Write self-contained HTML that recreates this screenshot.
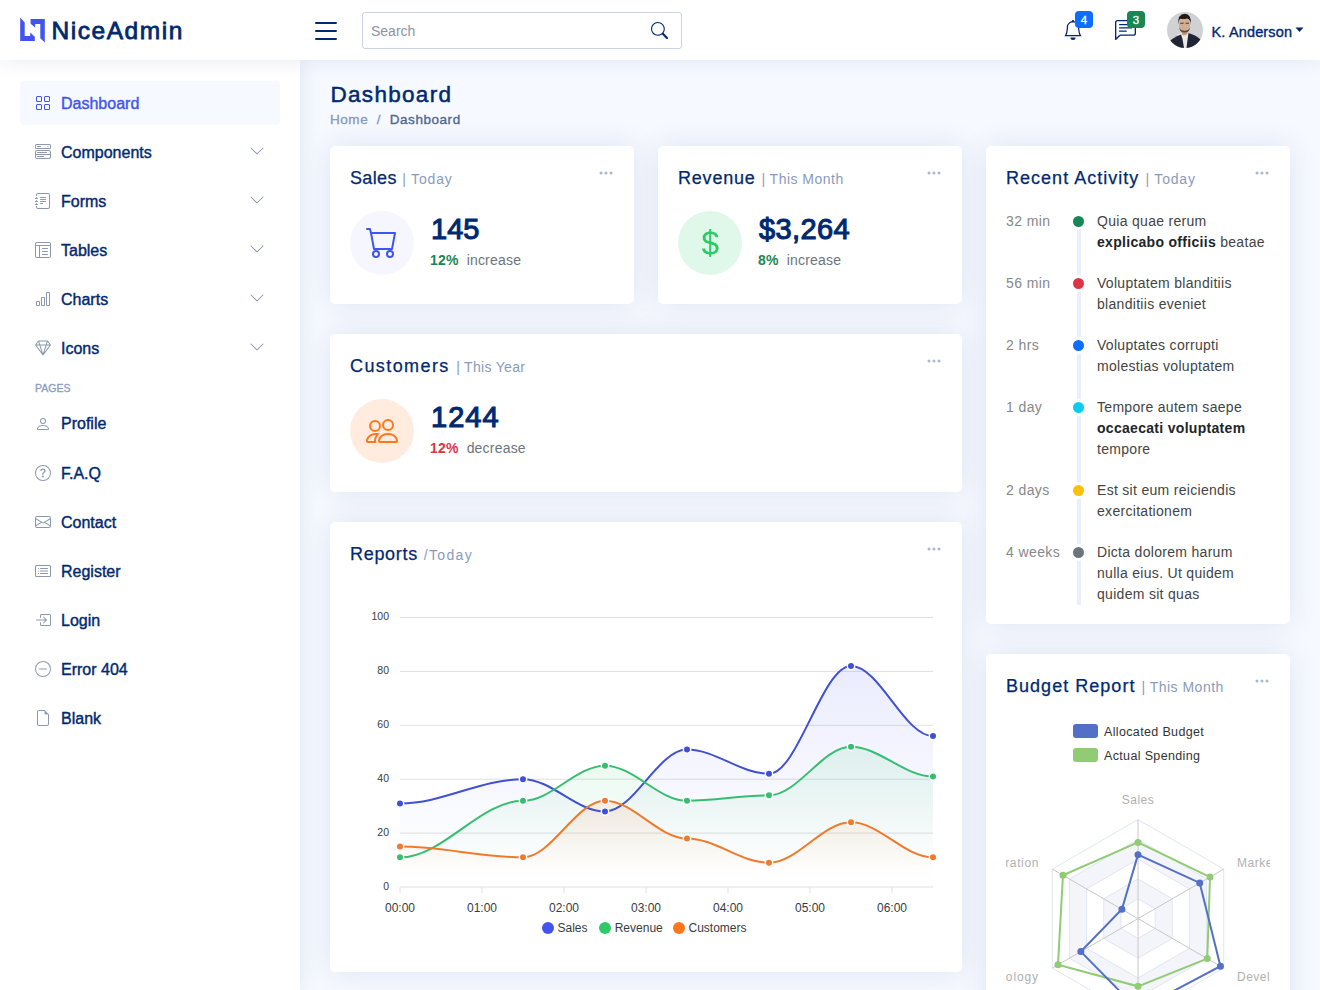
<!DOCTYPE html>
<html>
<head>
<meta charset="utf-8">
<style>
*{box-sizing:border-box;margin:0;padding:0}
html,body{width:1320px;height:990px;overflow:hidden}
body{font-family:"Liberation Sans",sans-serif;background:#f6f9ff;color:#444;position:relative}
svg text{font-family:"Liberation Sans",sans-serif}
.abs{position:absolute}
/* header */
#header{position:absolute;left:0;top:0;width:1320px;height:60px;background:#fff;box-shadow:0 2px 20px rgba(1,41,112,.08);z-index:5}
.logo-text{position:absolute;left:51.5px;top:15px;font-size:24.5px;line-height:32px;font-weight:400;color:#012970;letter-spacing:1.55px;-webkit-text-stroke:0.8px #012970}
.search{position:absolute;left:362px;top:11.5px;width:320px;height:37px;border:1px solid rgba(1,41,112,.2);border-radius:3px}
.search span{position:absolute;left:8px;top:9px;font-size:14px;line-height:18px;color:#8a94a6}
.badge{position:absolute;top:11px;height:17px;width:18px;border-radius:4px;color:#fff;font-size:11.5px;line-height:18px;text-align:center;-webkit-text-stroke:.3px #fff}
.pname{position:absolute;left:1211.5px;top:23px;letter-spacing:.15px;font-size:14.5px;line-height:18px;font-weight:400;color:#012970;-webkit-text-stroke:0.35px #012970}
/* sidebar */
#sidebar{position:absolute;left:0;top:60px;width:300px;height:930px;background:#fff;box-shadow:0 0 20px rgba(1,41,112,.1);z-index:4}
.nav{position:absolute;left:20px;top:20.5px;width:260px}
.nl{position:relative;height:44.08px;margin-bottom:5px;border-radius:4px;color:#012970;font-size:16px;font-weight:400;-webkit-text-stroke:0.4px #012970}
.nl.active{-webkit-text-stroke:0.4px #4154f1}
.nl.active{background:#f6f9ff;color:#4154f1}
.nl svg.ic{position:absolute;left:15px;top:14.2px;width:16px;height:16px}
.nl .t{position:absolute;left:41px;top:14px;line-height:18px}
.nl svg.chev{position:absolute;left:229px;top:13.5px;width:16px;height:16px}
.heading{position:relative;margin:10px 0 5px 15px;height:16.5px;font-size:10.5px;line-height:16.5px;color:#899bbd;font-weight:400;-webkit-text-stroke:0.3px #899bbd;text-transform:uppercase}
/* page title */
.ptitle{position:absolute;left:330.5px;top:79.5px;font-size:22.5px;line-height:29px;font-weight:400;color:#012970;-webkit-text-stroke:0.5px #012970;letter-spacing:1.3px}
.bc{position:absolute;left:330px;top:110.5px;font-size:13.5px;line-height:18px;letter-spacing:.55px;color:#899bbd;font-weight:400;-webkit-text-stroke:0.35px #899bbd}
.bc .act{color:#51678f;-webkit-text-stroke:0.35px #51678f}
/* cards */
.card{position:absolute;background:#fff;border-radius:5px;box-shadow:0 0 30px rgba(1,41,112,.1)}
.ct{position:absolute;left:20px;top:21px;font-size:18px;line-height:22px;color:#012970;white-space:nowrap;-webkit-text-stroke:0.25px #012970}
.ct span{color:#899bbd;font-size:14px;-webkit-text-stroke:0}
.dots{position:absolute;right:20px;top:25px;width:16px;height:4px}
.icon-c{position:absolute;left:20px;top:64.6px;width:64px;height:64px;border-radius:50%}
.num{position:absolute;left:101px;top:65.5px;font-size:29px;line-height:34px;font-weight:400;color:#012970;-webkit-text-stroke:1.1px #012970}
.sub{position:absolute;left:100px;top:105px;font-size:14px;line-height:18px;color:#6c757d;white-space:nowrap;letter-spacing:.2px}
.sub b{font-weight:700;margin-right:8px}
/* activity */
.act-list{position:absolute;left:20px;top:64.6px;width:264px;font-size:14px}
.ai{position:relative;display:flex}
.al{position:relative;width:64px;flex:0 0 64px;color:#888;line-height:21px;letter-spacing:.4px}
.al:before{content:"";position:absolute;right:-11px;width:4px;top:0;bottom:0;background:#eceefe}
.ai:first-child .al:before{top:5px}
.ab{position:relative;z-index:1;flex:0 0 17px;height:17px;margin-top:2.4px;border:3px solid #fff;border-radius:50%}
.ac{padding-left:10px;padding-bottom:20px;line-height:21px;color:#444;white-space:nowrap;letter-spacing:.3px}
.ai:last-child .ac{padding-bottom:0}
.ac b{color:#212529;font-weight:700}
.chart{position:absolute;left:0;top:0}
.radar{position:absolute;left:0;top:0}
</style>
</head>
<body>
<div id="header">
  <svg class="abs" style="left:16px;top:14px" width="34" height="32" viewBox="16 14 34 32">
    <path d="M20.2 17.6 L24.7 22.4 L24.7 36 L30.2 36 L30.2 32.4 L34.8 36.7 L34.8 40.9 L20.2 40.9 Z" fill="#4154f1"/>
    <path d="M30.6 18.9 L44.8 18.9 L44.8 42.5 L40.3 38.3 L40.3 24 L35.1 24 L35.1 27.6 L30.6 23.7 Z" fill="#4154f1"/>
  </svg>
  <div class="logo-text">NiceAdmin</div>
  <svg class="abs" style="left:310px;top:15px" width="32" height="32" viewBox="0 0 16 16" fill="#012970"><path d="M2.5 12a.5.5 0 0 1 .5-.5h10a.5.5 0 0 1 0 1H3a.5.5 0 0 1-.5-.5zm0-4a.5.5 0 0 1 .5-.5h10a.5.5 0 0 1 0 1H3a.5.5 0 0 1-.5-.5zm0-4a.5.5 0 0 1 .5-.5h10a.5.5 0 0 1 0 1H3a.5.5 0 0 1-.5-.5z"/></svg>
  <div class="search"><span>Search</span>
    <svg class="abs" style="left:288px;top:9px" width="17" height="17" viewBox="0 0 16 16" fill="#012970"><path d="M11.742 10.344a6.5 6.5 0 1 0-1.397 1.398h-.001c.03.04.062.078.098.115l3.85 3.85a1 1 0 0 0 1.415-1.414l-3.85-3.85a1.007 1.007 0 0 0-.115-.1zM12 6.5a5.5 5.5 0 1 1-11 0 5.5 5.5 0 0 1 11 0z"/></svg>
  </div>
  <!-- bell -->
  <svg class="abs" style="left:1063px;top:20px" width="20" height="20" viewBox="0 0 16 16" fill="#012970"><path d="M8 16a2 2 0 0 0 2-2H6a2 2 0 0 0 2 2zM8 1.918l-.797.161A4.002 4.002 0 0 0 4 6c0 .628-.134 2.197-.459 3.742-.16.767-.376 1.566-.663 2.258h10.244c-.287-.692-.502-1.49-.663-2.258C12.134 8.197 12 6.628 12 6a4.002 4.002 0 0 0-3.203-3.92L8 1.917zM14.22 12c.223.447.481.801.78 1H1c.299-.199.557-.553.78-1C2.68 10.2 3 6.88 3 6c0-2.42 1.72-4.44 4.005-4.901a1 1 0 1 1 1.99 0A5.002 5.002 0 0 1 13 6c0 .88.32 4.2 1.22 6z"/></svg>
  <div class="badge" style="left:1075px;background:#0d6efd">4</div>
  <!-- chat -->
  <svg class="abs" style="left:1114.5px;top:19.8px" width="21" height="21" viewBox="0 0 16 16" fill="#012970"><path d="M14 1a1 1 0 0 1 1 1v8a1 1 0 0 1-1 1H4.414A2 2 0 0 0 3 11.586l-2 2V2a1 1 0 0 1 1-1h12zM2 0a2 2 0 0 0-2 2v12.793a.5.5 0 0 0 .854.353l2.853-2.853A1 1 0 0 1 4.414 12H14a2 2 0 0 0 2-2V2a2 2 0 0 0-2-2H2z"/><path d="M3 3.5a.5.5 0 0 1 .5-.5h9a.5.5 0 0 1 0 1h-9a.5.5 0 0 1-.5-.5zM3 6a.5.5 0 0 1 .5-.5h9a.5.5 0 0 1 0 1h-9A.5.5 0 0 1 3 6zm0 2.5a.5.5 0 0 1 .5-.5h5a.5.5 0 0 1 0 1h-5a.5.5 0 0 1-.5-.5z"/></svg>
  <div class="badge" style="left:1127px;background:#198754">3</div>
  <!-- avatar -->
  <svg class="abs" style="left:1167px;top:12px" width="36" height="36" viewBox="0 0 36 36">
    <defs><clipPath id="av"><circle cx="18" cy="18" r="18"/></clipPath></defs>
    <g clip-path="url(#av)">
      <rect width="36" height="36" fill="#cfd1d4"/>
      <path d="M11 22 Q17 20 23 21 L24 36 L11 36 Z" fill="#eceae8"/>
      <path d="M2 30 Q5 26 14 22.5 L15.5 27 L17 36 L2 36 Z" fill="#1f2535"/>
      <path d="M21.5 21 Q30 23.5 34 28 L35 36 L19.5 36 L20.5 28 Z" fill="#1f2535"/>
      <path d="M14.5 17 L15 22.5 Q17.5 24.5 20.5 22 L20.5 17 Z" fill="#c19a80"/>
      <ellipse cx="17.6" cy="12.5" rx="5.6" ry="7.2" fill="#d2ad92"/>
      <path d="M12 15 Q12.5 20.5 17.6 20.5 Q22.7 20.5 23.2 15 Q22 18.5 17.6 18.8 Q13.2 18.5 12 15 Z" fill="#5a4436"/>
      <path d="M11.3 12.5 Q10.5 2 17.8 1.8 Q24.5 2 23.8 12 Q23.2 7 20 6.5 Q16 7.5 13 6.8 Q11.8 8.5 11.3 12.5 Z" fill="#231a16"/>
      <path d="M13.2 11.2 h3.4 M18.6 11.2 h3.4" stroke="#4a3a32" stroke-width="1.1"/>
    </g>
  </svg>
  <div class="pname">K. Anderson</div>
  <svg class="abs" style="left:1295px;top:27px" width="9" height="6" viewBox="0 0 9 6"><path d="M0.5 0.5 L8.5 0.5 L4.5 5 Z" fill="#012970"/></svg>
</div>

<div id="sidebar">
 <div class="nav">
  <div class="nl active"><svg class="ic" viewBox="0 0 16 16" fill="#4154f1"><path d="M1 2.5A1.5 1.5 0 0 1 2.5 1h3A1.5 1.5 0 0 1 7 2.5v3A1.5 1.5 0 0 1 5.5 7h-3A1.5 1.5 0 0 1 1 5.5v-3zM2.5 2a.5.5 0 0 0-.5.5v3a.5.5 0 0 0 .5.5h3a.5.5 0 0 0 .5-.5v-3a.5.5 0 0 0-.5-.5h-3zm6.5.5A1.5 1.5 0 0 1 10.5 1h3A1.5 1.5 0 0 1 15 2.5v3A1.5 1.5 0 0 1 13.5 7h-3A1.5 1.5 0 0 1 9 5.5v-3zm1.5-.5a.5.5 0 0 0-.5.5v3a.5.5 0 0 0 .5.5h3a.5.5 0 0 0 .5-.5v-3a.5.5 0 0 0-.5-.5h-3zM1 10.5A1.5 1.5 0 0 1 2.5 9h3A1.5 1.5 0 0 1 7 10.5v3A1.5 1.5 0 0 1 5.5 15h-3A1.5 1.5 0 0 1 1 13.5v-3zm1.5-.5a.5.5 0 0 0-.5.5v3a.5.5 0 0 0 .5.5h3a.5.5 0 0 0 .5-.5v-3a.5.5 0 0 0-.5-.5h-3zm6.5.5A1.5 1.5 0 0 1 10.5 9h3a1.5 1.5 0 0 1 1.5 1.5v3a1.5 1.5 0 0 1-1.5 1.5h-3A1.5 1.5 0 0 1 9 13.5v-3zm1.5-.5a.5.5 0 0 0-.5.5v3a.5.5 0 0 0 .5.5h3a.5.5 0 0 0 .5-.5v-3a.5.5 0 0 0-.5-.5h-3z"/></svg><span class="t">Dashboard</span></div>
  <div class="nl"><svg class="ic" viewBox="0 0 16 16" fill="#8d98ae"><path d="M0 1.5A1.5 1.5 0 0 1 1.5 0h13A1.5 1.5 0 0 1 16 1.5v2A1.5 1.5 0 0 1 14.5 5h-13A1.5 1.5 0 0 1 0 3.5v-2zM1.5 1a.5.5 0 0 0-.5.5v2a.5.5 0 0 0 .5.5h13a.5.5 0 0 0 .5-.5v-2a.5.5 0 0 0-.5-.5h-13z"/><path d="M2 2.5a.5.5 0 0 1 .5-.5h3a.5.5 0 0 1 0 1h-3a.5.5 0 0 1-.5-.5zm10.823.323-.396-.396A.25.25 0 0 1 12.604 2h.792a.25.25 0 0 1 .177.427l-.396.396a.25.25 0 0 1-.354 0zM0 8a2 2 0 0 1 2-2h12a2 2 0 0 1 2 2v5a2 2 0 0 1-2 2H2a2 2 0 0 1-2-2V8zm1 3v2a1 1 0 0 0 1 1h12a1 1 0 0 0 1-1v-2H1zm14-1V8a1 1 0 0 0-1-1H2a1 1 0 0 0-1 1v2h14zM2 8.5a.5.5 0 0 1 .5-.5h9a.5.5 0 0 1 0 1h-9a.5.5 0 0 1-.5-.5zm0 4a.5.5 0 0 1 .5-.5h6a.5.5 0 0 1 0 1h-6a.5.5 0 0 1-.5-.5z"/></svg><span class="t">Components</span><svg class="chev" viewBox="0 0 16 16" fill="#8d98ae"><path d="M1.646 4.646a.5.5 0 0 1 .708 0L8 10.293l5.646-5.647a.5.5 0 0 1 .708.708l-6 6a.5.5 0 0 1-.708 0l-6-6a.5.5 0 0 1 0-.708z"/></svg></div>
  <div class="nl"><svg class="ic" viewBox="0 0 16 16" fill="#8d98ae"><path d="M5 10.5a.5.5 0 0 1 .5-.5h2a.5.5 0 0 1 0 1h-2a.5.5 0 0 1-.5-.5zm0-2a.5.5 0 0 1 .5-.5h5a.5.5 0 0 1 0 1h-5a.5.5 0 0 1-.5-.5zm0-2a.5.5 0 0 1 .5-.5h5a.5.5 0 0 1 0 1h-5a.5.5 0 0 1-.5-.5zm0-2a.5.5 0 0 1 .5-.5h5a.5.5 0 0 1 0 1h-5a.5.5 0 0 1-.5-.5z"/><path d="M3 0h10a2 2 0 0 1 2 2v12a2 2 0 0 1-2 2H3a2 2 0 0 1-2-2v-1h1v1a1 1 0 0 0 1 1h10a1 1 0 0 0 1-1V2a1 1 0 0 0-1-1H3a1 1 0 0 0-1 1v1H1V2a2 2 0 0 1 2-2z"/><path d="M1 5v-.5a.5.5 0 0 1 1 0V5h.5a.5.5 0 0 1 0 1h-2a.5.5 0 0 1 0-1H1zm0 3v-.5a.5.5 0 0 1 1 0V8h.5a.5.5 0 0 1 0 1h-2a.5.5 0 0 1 0-1H1zm0 3v-.5a.5.5 0 0 1 1 0v.5h.5a.5.5 0 0 1 0 1h-2a.5.5 0 0 1 0-1H1z"/></svg><span class="t">Forms</span><svg class="chev" viewBox="0 0 16 16" fill="#8d98ae"><path d="M1.646 4.646a.5.5 0 0 1 .708 0L8 10.293l5.646-5.647a.5.5 0 0 1 .708.708l-6 6a.5.5 0 0 1-.708 0l-6-6a.5.5 0 0 1 0-.708z"/></svg></div>
  <div class="nl"><svg class="ic" viewBox="0 0 16 16" fill="#8d98ae"><path d="M13 6.5a.5.5 0 0 0-.5-.5h-5a.5.5 0 0 0 0 1h5a.5.5 0 0 0 .5-.5zm0 3a.5.5 0 0 0-.5-.5h-5a.5.5 0 0 0 0 1h5a.5.5 0 0 0 .5-.5zm-.5 2.5a.5.5 0 0 1 0 1h-5a.5.5 0 0 1 0-1h5z"/><path d="M14 0a2 2 0 0 1 2 2v12a2 2 0 0 1-2 2H2a2 2 0 0 1-2-2V2a2 2 0 0 1 2-2h12zM2 1a1 1 0 0 0-1 1v1h14V2a1 1 0 0 0-1-1H2zM1 4v10a1 1 0 0 0 1 1h2V4H1zm4 0v11h9a1 1 0 0 0 1-1V4H5z"/></svg><span class="t">Tables</span><svg class="chev" viewBox="0 0 16 16" fill="#8d98ae"><path d="M1.646 4.646a.5.5 0 0 1 .708 0L8 10.293l5.646-5.647a.5.5 0 0 1 .708.708l-6 6a.5.5 0 0 1-.708 0l-6-6a.5.5 0 0 1 0-.708z"/></svg></div>
  <div class="nl"><svg class="ic" viewBox="0 0 16 16" fill="#8d98ae"><path d="M4 11H2v3h2v-3zm5-4H7v7h2V7zm5-5v12h-2V2h2zm-2-1a1 1 0 0 0-1 1v12a1 1 0 0 0 1 1h2a1 1 0 0 0 1-1V2a1 1 0 0 0-1-1h-2zM6 7a1 1 0 0 1 1-1h2a1 1 0 0 1 1 1v7a1 1 0 0 1-1 1H7a1 1 0 0 1-1-1V7zm-5 4a1 1 0 0 1 1-1h2a1 1 0 0 1 1 1v3a1 1 0 0 1-1 1H2a1 1 0 0 1-1-1v-3z"/></svg><span class="t">Charts</span><svg class="chev" viewBox="0 0 16 16" fill="#8d98ae"><path d="M1.646 4.646a.5.5 0 0 1 .708 0L8 10.293l5.646-5.647a.5.5 0 0 1 .708.708l-6 6a.5.5 0 0 1-.708 0l-6-6a.5.5 0 0 1 0-.708z"/></svg></div>
  <div class="nl"><svg class="ic" viewBox="0 0 16 16" fill="#8d98ae"><path d="M3.1.7a.5.5 0 0 1 .4-.2h9a.5.5 0 0 1 .4.2l2.976 3.974c.149.185.156.45.01.644L8.4 15.3a.5.5 0 0 1-.8 0L.1 5.3a.5.5 0 0 1 0-.6l3-4zm11.386 3.785-1.806-2.41-.776 2.413 2.582-.003zm-3.633.004.961-2.989H4.186l.963 2.995 5.704-.006zM5.47 5.495 8 13.366l2.532-7.876-5.062.005zm-1.371-.999-.78-2.422-1.818 2.425 2.598-.003zM1.499 5.5l5.113 6.817-2.192-6.82L1.5 5.5zm7.889 6.817 5.123-6.83-2.928.002-2.195 6.828z"/></svg><span class="t">Icons</span><svg class="chev" viewBox="0 0 16 16" fill="#8d98ae"><path d="M1.646 4.646a.5.5 0 0 1 .708 0L8 10.293l5.646-5.647a.5.5 0 0 1 .708.708l-6 6a.5.5 0 0 1-.708 0l-6-6a.5.5 0 0 1 0-.708z"/></svg></div>
  <div class="heading">Pages</div>
  <div class="nl"><svg class="ic" viewBox="0 0 16 16" fill="#8d98ae"><path d="M8 8a3 3 0 1 0 0-6 3 3 0 0 0 0 6zm2-3a2 2 0 1 1-4 0 2 2 0 0 1 4 0zm4 8c0 1-1 1-1 1H3s-1 0-1-1 1-4 6-4 6 3 6 4zm-1-.004c-.001-.246-.154-.986-.832-1.664C11.516 10.68 10.289 10 8 10c-2.29 0-3.516.68-4.168 1.332-.678.678-.83 1.418-.832 1.664h10z"/></svg><span class="t">Profile</span></div>
  <div class="nl"><svg class="ic" viewBox="0 0 16 16" fill="#8d98ae"><path d="M8 15A7 7 0 1 1 8 1a7 7 0 0 1 0 14zm0 1A8 8 0 1 0 8 0a8 8 0 0 0 0 16z"/><path d="M5.255 5.786a.237.237 0 0 0 .241.247h.825c.138 0 .248-.113.266-.25.09-.656.54-1.134 1.342-1.134.686 0 1.314.343 1.314 1.168 0 .635-.374.927-.965 1.371-.673.489-1.206 1.06-1.168 1.987l.003.217a.25.25 0 0 0 .25.246h.811a.25.25 0 0 0 .25-.25v-.105c0-.718.273-.927 1.01-1.486.609-.463 1.244-.977 1.244-2.056 0-1.511-1.276-2.241-2.673-2.241-1.267 0-2.655.59-2.75 2.286zm1.557 5.763c0 .533.425.927 1.01.927.609 0 1.028-.394 1.028-.927 0-.552-.42-.94-1.029-.94-.584 0-1.009.388-1.009.94z"/></svg><span class="t">F.A.Q</span></div>
  <div class="nl"><svg class="ic" viewBox="0 0 16 16" fill="#8d98ae"><path d="M0 4a2 2 0 0 1 2-2h12a2 2 0 0 1 2 2v8a2 2 0 0 1-2 2H2a2 2 0 0 1-2-2V4Zm2-1a1 1 0 0 0-1 1v.217l7 4.2 7-4.2V4a1 1 0 0 0-1-1H2Zm13 2.383-4.708 2.825L15 11.105V5.383Zm-.034 6.876-5.64-3.471L8 9.583l-1.326-.795-5.64 3.47A1 1 0 0 0 2 13h12a1 1 0 0 0 .966-.741ZM1 11.105l4.708-2.897L1 5.383v5.722Z"/></svg><span class="t">Contact</span></div>
  <div class="nl"><svg class="ic" viewBox="0 0 16 16" fill="#8d98ae"><path d="M14.5 3a.5.5 0 0 1 .5.5v9a.5.5 0 0 1-.5.5h-13a.5.5 0 0 1-.5-.5v-9a.5.5 0 0 1 .5-.5h13zm-13-1A1.5 1.5 0 0 0 0 3.5v9A1.5 1.5 0 0 0 1.5 14h13a1.5 1.5 0 0 0 1.5-1.5v-9A1.5 1.5 0 0 0 14.5 2h-13z"/><path d="M5 8a.5.5 0 0 1 .5-.5h7a.5.5 0 0 1 0 1h-7A.5.5 0 0 1 5 8zm0-2.5a.5.5 0 0 1 .5-.5h7a.5.5 0 0 1 0 1h-7a.5.5 0 0 1-.5-.5zm0 5a.5.5 0 0 1 .5-.5h7a.5.5 0 0 1 0 1h-7a.5.5 0 0 1-.5-.5zm-1-5a.5.5 0 1 1-1 0 .5.5 0 0 1 1 0zM4 8a.5.5 0 1 1-1 0 .5.5 0 0 1 1 0zm0 2.5a.5.5 0 1 1-1 0 .5.5 0 0 1 1 0z"/></svg><span class="t">Register</span></div>
  <div class="nl"><svg class="ic" viewBox="0 0 16 16" fill="#8d98ae"><path d="M6 3.5a.5.5 0 0 1 .5-.5h8a.5.5 0 0 1 .5.5v9a.5.5 0 0 1-.5.5h-8a.5.5 0 0 1-.5-.5v-2a.5.5 0 0 0-1 0v2A1.5 1.5 0 0 0 6.5 14h8a1.5 1.5 0 0 0 1.5-1.5v-9A1.5 1.5 0 0 0 14.5 2h-8A1.5 1.5 0 0 0 5 3.5v2a.5.5 0 0 0 1 0v-2z"/><path d="M11.854 8.354a.5.5 0 0 0 0-.708l-3-3a.5.5 0 1 0-.708.708L10.293 7.5H1.5a.5.5 0 0 0 0 1h8.793l-2.147 2.146a.5.5 0 0 0 .708.708l3-3z"/></svg><span class="t">Login</span></div>
  <div class="nl"><svg class="ic" viewBox="0 0 16 16" fill="#8d98ae"><path d="M8 15A7 7 0 1 1 8 1a7 7 0 0 1 0 14zm0 1A8 8 0 1 0 8 0a8 8 0 0 0 0 16z"/><path d="M4 8a.5.5 0 0 1 .5-.5h7a.5.5 0 0 1 0 1h-7A.5.5 0 0 1 4 8z"/></svg><span class="t">Error 404</span></div>
  <div class="nl"><svg class="ic" viewBox="0 0 16 16" fill="#8d98ae"><path d="M14 4.5V14a2 2 0 0 1-2 2H4a2 2 0 0 1-2-2V2a2 2 0 0 1 2-2h5.5L14 4.5zm-3 0A1.5 1.5 0 0 1 9.5 3V1H4a1 1 0 0 0-1 1v12a1 1 0 0 0 1 1h8a1 1 0 0 0 1-1V4.5h-2z"/></svg><span class="t">Blank</span></div>
 </div>
</div>

<div class="ptitle">Dashboard</div>
<div class="bc">Home&nbsp;&nbsp;/&nbsp;&nbsp;<span class="act">Dashboard</span></div>

<!-- Sales -->
<div class="card" style="left:330px;top:146px;width:304px;height:158px">
  <div class="ct" style="letter-spacing:.35px">Sales <span style="letter-spacing:.83px">| Today</span></div>
  <svg class="dots" viewBox="0 0 16 4"><circle cx="3" cy="2" r="1.5" fill="#aab7cf"/><circle cx="8" cy="2" r="1.5" fill="#aab7cf"/><circle cx="13" cy="2" r="1.5" fill="#aab7cf"/></svg>
  <div class="icon-c" style="background:#f6f6fe">
    <svg class="abs" style="left:16px;top:15px" width="32" height="32" viewBox="0 0 16 16" fill="#4154f1"><path d="M0 1.5A.5.5 0 0 1 .5 1H2a.5.5 0 0 1 .485.379L2.89 3H14.5a.5.5 0 0 1 .491.592l-1.5 8A.5.5 0 0 1 13 12H4a.5.5 0 0 1-.491-.408L2.01 3.607 1.61 2H.5a.5.5 0 0 1-.5-.5zM3.102 4l1.313 7h8.17l1.313-7H3.102zM5 12a2 2 0 1 0 0 4 2 2 0 0 0 0-4zm7 0a2 2 0 1 0 0 4 2 2 0 0 0 0-4zm-7 1a1 1 0 1 1 0 2 1 1 0 0 1 0-2zm7 0a1 1 0 1 1 0 2 1 1 0 0 1 0-2z"/></svg>
  </div>
  <div class="num">145</div>
  <div class="sub"><b style="color:#198754">12%</b>increase</div>
</div>

<!-- Revenue -->
<div class="card" style="left:658px;top:146px;width:304px;height:158px">
  <div class="ct" style="letter-spacing:.79px">Revenue <span style="letter-spacing:.48px">| This Month</span></div>
  <svg class="dots" viewBox="0 0 16 4"><circle cx="3" cy="2" r="1.5" fill="#aab7cf"/><circle cx="8" cy="2" r="1.5" fill="#aab7cf"/><circle cx="13" cy="2" r="1.5" fill="#aab7cf"/></svg>
  <div class="icon-c" style="background:#e0f8e9">
    <svg class="abs" style="left:16px;top:16px" width="32" height="32" viewBox="0 0 16 16" fill="#2eca6a"><path d="M4 10.781c.148 1.667 1.513 2.85 3.591 3.003V15h1.043v-1.216c2.27-.179 3.678-1.438 3.678-3.3 0-1.59-.947-2.51-2.956-3.028l-.722-.187V3.467c1.122.11 1.879.714 2.07 1.616h1.47c-.166-1.6-1.54-2.748-3.54-2.875V1H7.591v1.233c-1.939.23-3.27 1.472-3.27 3.156 0 1.454.966 2.483 2.661 2.917l.61.162v4.031c-1.149-.17-1.94-.8-2.131-1.718H4zm3.391-3.836c-1.043-.263-1.6-.825-1.6-1.616 0-.944.704-1.641 1.8-1.828v3.495l-.2-.05zm1.591 1.872c1.287.323 1.852.859 1.852 1.769 0 1.097-.826 1.828-2.2 1.939V8.73l.348.086z"/></svg>
  </div>
  <div class="num" style="letter-spacing:.4px">$3,264</div>
  <div class="sub"><b style="color:#198754">8%</b>increase</div>
</div>

<!-- Customers -->
<div class="card" style="left:330px;top:334px;width:632px;height:158px">
  <div class="ct" style="letter-spacing:1.41px">Customers <span style="letter-spacing:.32px">| This Year</span></div>
  <svg class="dots" viewBox="0 0 16 4"><circle cx="3" cy="2" r="1.5" fill="#aab7cf"/><circle cx="8" cy="2" r="1.5" fill="#aab7cf"/><circle cx="13" cy="2" r="1.5" fill="#aab7cf"/></svg>
  <div class="icon-c" style="background:#ffecdf">
    <svg class="abs" style="left:16px;top:16px" width="32" height="32" viewBox="0 0 16 16" fill="#ff771d"><path d="M15 14s1 0 1-1-1-4-5-4-5 3-5 4 1 1 1 1h8zm-7.978-1A.261.261 0 0 1 7 12.996c.001-.264.167-1.03.76-1.72C8.312 10.629 9.282 10 11 10c1.717 0 2.687.63 3.24 1.276.593.69.758 1.457.76 1.72l-.008.002a.274.274 0 0 1-.014.002H7.022zM11 7a2 2 0 1 0 0-4 2 2 0 0 0 0 4zm3-2a3 3 0 1 1-6 0 3 3 0 0 1 6 0zM6.936 9.28a5.88 5.88 0 0 0-1.23-.247A7.35 7.35 0 0 0 5 9c-4 0-5 3-5 4 0 .667.333 1 1 1h4.216A2.238 2.238 0 0 1 5 13c0-1.01.377-2.042 1.09-2.904.243-.294.526-.569.846-.816zM4.92 10A5.493 5.493 0 0 0 4 13H1c0-.26.164-1.03.76-1.724.545-.636 1.492-1.256 3.16-1.275zM1.5 5.5a3 3 0 1 1 6 0 3 3 0 0 1-6 0zm3-2a2 2 0 1 0 0 4 2 2 0 0 0 0-4z"/></svg>
  </div>
  <div class="num" style="letter-spacing:1px">1244</div>
  <div class="sub"><b style="color:#dc3545">12%</b>decrease</div>
</div>

<!-- Reports -->
<div class="card" style="left:330px;top:522px;width:632px;height:450px">
  <svg class="chart" width="632" height="450" viewBox="0 0 632 450">
<defs>
<linearGradient id="g0" x1="0" y1="0" x2="0" y2="1"><stop offset="0" stop-color="#4154f1" stop-opacity="0.11"/><stop offset="0.9" stop-color="#4154f1" stop-opacity="0.0"/><stop offset="1" stop-color="#4154f1" stop-opacity="0.0"/></linearGradient>
<linearGradient id="g1" x1="0" y1="0" x2="0" y2="1"><stop offset="0" stop-color="#2eca6a" stop-opacity="0.11"/><stop offset="0.9" stop-color="#2eca6a" stop-opacity="0.0"/><stop offset="1" stop-color="#2eca6a" stop-opacity="0.0"/></linearGradient>
<linearGradient id="g2" x1="0" y1="0" x2="0" y2="1"><stop offset="0" stop-color="#ff771d" stop-opacity="0.11"/><stop offset="0.9" stop-color="#ff771d" stop-opacity="0.0"/><stop offset="1" stop-color="#ff771d" stop-opacity="0.0"/></linearGradient>
</defs>
<line x1="70.0" y1="365.0" x2="603.0" y2="365.0" stroke="#e0e0e0" stroke-width="1"/>
<line x1="70.0" y1="311.1" x2="603.0" y2="311.1" stroke="#e0e0e0" stroke-width="1"/>
<line x1="70.0" y1="257.2" x2="603.0" y2="257.2" stroke="#e0e0e0" stroke-width="1"/>
<line x1="70.0" y1="203.3" x2="603.0" y2="203.3" stroke="#e0e0e0" stroke-width="1"/>
<line x1="70.0" y1="149.4" x2="603.0" y2="149.4" stroke="#e0e0e0" stroke-width="1"/>
<line x1="70.0" y1="95.5" x2="603.0" y2="95.5" stroke="#e0e0e0" stroke-width="1"/>
<text x="59" y="367.5" text-anchor="end" font-size="10.5" fill="#373d3f">0</text>
<text x="59" y="313.6" text-anchor="end" font-size="10.5" fill="#373d3f">20</text>
<text x="59" y="259.7" text-anchor="end" font-size="10.5" fill="#373d3f">40</text>
<text x="59" y="205.8" text-anchor="end" font-size="10.5" fill="#373d3f">60</text>
<text x="59" y="151.9" text-anchor="end" font-size="10.5" fill="#373d3f">80</text>
<text x="59" y="98.0" text-anchor="end" font-size="10.5" fill="#373d3f">100</text>
<line x1="70.0" y1="365.0" x2="70.0" y2="371.0" stroke="#e0e0e0" stroke-width="1"/>
<text x="70.0" y="390" text-anchor="middle" font-size="12" fill="#373d3f">00:00</text>
<line x1="152.0" y1="365.0" x2="152.0" y2="371.0" stroke="#e0e0e0" stroke-width="1"/>
<text x="152.0" y="390" text-anchor="middle" font-size="12" fill="#373d3f">01:00</text>
<line x1="234.0" y1="365.0" x2="234.0" y2="371.0" stroke="#e0e0e0" stroke-width="1"/>
<text x="234.0" y="390" text-anchor="middle" font-size="12" fill="#373d3f">02:00</text>
<line x1="316.0" y1="365.0" x2="316.0" y2="371.0" stroke="#e0e0e0" stroke-width="1"/>
<text x="316.0" y="390" text-anchor="middle" font-size="12" fill="#373d3f">03:00</text>
<line x1="398.0" y1="365.0" x2="398.0" y2="371.0" stroke="#e0e0e0" stroke-width="1"/>
<text x="398.0" y="390" text-anchor="middle" font-size="12" fill="#373d3f">04:00</text>
<line x1="480.0" y1="365.0" x2="480.0" y2="371.0" stroke="#e0e0e0" stroke-width="1"/>
<text x="480.0" y="390" text-anchor="middle" font-size="12" fill="#373d3f">05:00</text>
<line x1="562.0" y1="365.0" x2="562.0" y2="371.0" stroke="#e0e0e0" stroke-width="1"/>
<text x="562.0" y="390" text-anchor="middle" font-size="12" fill="#373d3f">06:00</text>
<path d="M70.00,281.46 C113.05,281.46 149.95,257.20 193.00,257.20 C221.70,257.20 246.30,289.54 275.00,289.54 C303.70,289.54 328.30,227.56 357.00,227.56 C385.70,227.56 410.30,251.81 439.00,251.81 C467.70,251.81 492.30,144.01 521.00,144.01 C549.70,144.01 574.30,214.08 603.00,214.08 L603.00,365.00 L70.00,365.00 Z" fill="url(#g0)"/>
<path d="M70.00,335.36 C113.05,335.36 149.95,278.76 193.00,278.76 C221.70,278.76 246.30,243.73 275.00,243.73 C303.70,243.73 328.30,278.76 357.00,278.76 C385.70,278.76 410.30,273.37 439.00,273.37 C467.70,273.37 492.30,224.86 521.00,224.86 C549.70,224.86 574.30,254.50 603.00,254.50 L603.00,365.00 L70.00,365.00 Z" fill="url(#g1)"/>
<path d="M70.00,324.58 C113.05,324.58 149.95,335.36 193.00,335.36 C221.70,335.36 246.30,278.76 275.00,278.76 C303.70,278.76 328.30,316.49 357.00,316.49 C385.70,316.49 410.30,340.75 439.00,340.75 C467.70,340.75 492.30,300.32 521.00,300.32 C549.70,300.32 574.30,335.36 603.00,335.36 L603.00,365.00 L70.00,365.00 Z" fill="url(#g2)"/>
<path d="M70.00,281.46 C113.05,281.46 149.95,257.20 193.00,257.20 C221.70,257.20 246.30,289.54 275.00,289.54 C303.70,289.54 328.30,227.56 357.00,227.56 C385.70,227.56 410.30,251.81 439.00,251.81 C467.70,251.81 492.30,144.01 521.00,144.01 C549.70,144.01 574.30,214.08 603.00,214.08" fill="none" stroke="#4150d2" stroke-width="2"/>
<path d="M70.00,335.36 C113.05,335.36 149.95,278.76 193.00,278.76 C221.70,278.76 246.30,243.73 275.00,243.73 C303.70,243.73 328.30,278.76 357.00,278.76 C385.70,278.76 410.30,273.37 439.00,273.37 C467.70,273.37 492.30,224.86 521.00,224.86 C549.70,224.86 574.30,254.50 603.00,254.50" fill="none" stroke="#36bd70" stroke-width="2"/>
<path d="M70.00,324.58 C113.05,324.58 149.95,335.36 193.00,335.36 C221.70,335.36 246.30,278.76 275.00,278.76 C303.70,278.76 328.30,316.49 357.00,316.49 C385.70,316.49 410.30,340.75 439.00,340.75 C467.70,340.75 492.30,300.32 521.00,300.32 C549.70,300.32 574.30,335.36 603.00,335.36" fill="none" stroke="#ee7a2c" stroke-width="2"/>
<circle cx="70.00" cy="281.46" r="3.7" fill="#4150d2" stroke="#fff" stroke-width="1.4"/>
<circle cx="193.00" cy="257.20" r="3.7" fill="#4150d2" stroke="#fff" stroke-width="1.4"/>
<circle cx="275.00" cy="289.54" r="3.7" fill="#4150d2" stroke="#fff" stroke-width="1.4"/>
<circle cx="357.00" cy="227.56" r="3.7" fill="#4150d2" stroke="#fff" stroke-width="1.4"/>
<circle cx="439.00" cy="251.81" r="3.7" fill="#4150d2" stroke="#fff" stroke-width="1.4"/>
<circle cx="521.00" cy="144.01" r="3.7" fill="#4150d2" stroke="#fff" stroke-width="1.4"/>
<circle cx="603.00" cy="214.08" r="3.7" fill="#4150d2" stroke="#fff" stroke-width="1.4"/>
<circle cx="70.00" cy="335.36" r="3.7" fill="#36bd70" stroke="#fff" stroke-width="1.4"/>
<circle cx="193.00" cy="278.76" r="3.7" fill="#36bd70" stroke="#fff" stroke-width="1.4"/>
<circle cx="275.00" cy="243.73" r="3.7" fill="#36bd70" stroke="#fff" stroke-width="1.4"/>
<circle cx="357.00" cy="278.76" r="3.7" fill="#36bd70" stroke="#fff" stroke-width="1.4"/>
<circle cx="439.00" cy="273.37" r="3.7" fill="#36bd70" stroke="#fff" stroke-width="1.4"/>
<circle cx="521.00" cy="224.86" r="3.7" fill="#36bd70" stroke="#fff" stroke-width="1.4"/>
<circle cx="603.00" cy="254.50" r="3.7" fill="#36bd70" stroke="#fff" stroke-width="1.4"/>
<circle cx="70.00" cy="324.58" r="3.7" fill="#ee7a2c" stroke="#fff" stroke-width="1.4"/>
<circle cx="193.00" cy="335.36" r="3.7" fill="#ee7a2c" stroke="#fff" stroke-width="1.4"/>
<circle cx="275.00" cy="278.76" r="3.7" fill="#ee7a2c" stroke="#fff" stroke-width="1.4"/>
<circle cx="357.00" cy="316.49" r="3.7" fill="#ee7a2c" stroke="#fff" stroke-width="1.4"/>
<circle cx="439.00" cy="340.75" r="3.7" fill="#ee7a2c" stroke="#fff" stroke-width="1.4"/>
<circle cx="521.00" cy="300.32" r="3.7" fill="#ee7a2c" stroke="#fff" stroke-width="1.4"/>
<circle cx="603.00" cy="335.36" r="3.7" fill="#ee7a2c" stroke="#fff" stroke-width="1.4"/>
<circle cx="218" cy="406" r="6" fill="#4154f1"/>
<text x="227.5" y="410.29999999999995" font-size="12" fill="#373d3f">Sales</text>
<circle cx="275" cy="406" r="6" fill="#2eca6a"/>
<text x="284.70000000000005" y="410.29999999999995" font-size="12" fill="#373d3f">Revenue</text>
<circle cx="349" cy="406" r="6" fill="#ff771d"/>
<text x="358.5" y="410.29999999999995" font-size="12" fill="#373d3f">Customers</text>
</svg>
  <div class="ct" style="letter-spacing:.7px">Reports <span style="letter-spacing:1.37px">/Today</span></div>
  <svg class="dots" viewBox="0 0 16 4"><circle cx="3" cy="2" r="1.5" fill="#aab7cf"/><circle cx="8" cy="2" r="1.5" fill="#aab7cf"/><circle cx="13" cy="2" r="1.5" fill="#aab7cf"/></svg>
</div>

<!-- Recent activity -->
<div class="card" style="left:986px;top:146px;width:304px;height:478px">
  <div class="ct" style="letter-spacing:1.02px">Recent Activity <span style="letter-spacing:.83px">| Today</span></div>
  <svg class="dots" viewBox="0 0 16 4"><circle cx="3" cy="2" r="1.5" fill="#aab7cf"/><circle cx="8" cy="2" r="1.5" fill="#aab7cf"/><circle cx="13" cy="2" r="1.5" fill="#aab7cf"/></svg>
  <div class="act-list">
    <div class="ai"><div class="al">32 min</div><i class="ab" style="background:#198754"></i><div class="ac">Quia quae rerum<br><b>explicabo officiis</b> beatae</div></div>
    <div class="ai"><div class="al">56 min</div><i class="ab" style="background:#dc3545"></i><div class="ac">Voluptatem blanditiis<br>blanditiis eveniet</div></div>
    <div class="ai"><div class="al">2 hrs</div><i class="ab" style="background:#0d6efd"></i><div class="ac">Voluptates corrupti<br>molestias voluptatem</div></div>
    <div class="ai"><div class="al">1 day</div><i class="ab" style="background:#0dcaf0"></i><div class="ac">Tempore autem saepe<br><b>occaecati voluptatem</b><br>tempore</div></div>
    <div class="ai"><div class="al">2 days</div><i class="ab" style="background:#ffc107"></i><div class="ac">Est sit eum reiciendis<br>exercitationem</div></div>
    <div class="ai"><div class="al">4 weeks</div><i class="ab" style="background:#6c757d"></i><div class="ac">Dicta dolorem harum<br>nulla eius. Ut quidem<br>quidem sit quas</div></div>
  </div>
</div>

<!-- Budget -->
<div class="card" style="left:986px;top:654px;width:304px;height:400px">
  <svg class="radar" width="304" height="400" viewBox="0 0 304 400">
<defs><clipPath id="rc"><rect x="20" y="0" width="264" height="400"/></clipPath></defs>
<g clip-path="url(#rc)">
<polygon points="152.00,165.60 66.26,215.10 66.26,314.10 152.00,363.60 237.74,314.10 237.74,215.10" fill="#fff" stroke="none"/>
<polygon points="152.00,185.40 83.41,225.00 83.41,304.20 152.00,343.80 220.59,304.20 220.59,225.00" fill="#f4f5fa" stroke="none"/>
<polygon points="152.00,205.20 100.56,234.90 100.56,294.30 152.00,324.00 203.44,294.30 203.44,234.90" fill="#fff" stroke="none"/>
<polygon points="152.00,225.00 117.71,244.80 117.71,284.40 152.00,304.20 186.29,284.40 186.29,244.80" fill="#f4f5fa" stroke="none"/>
<polygon points="152.00,244.80 134.85,254.70 134.85,274.50 152.00,284.40 169.15,274.50 169.15,254.70" fill="#fff" stroke="none"/>
<polygon points="152.00,165.60 66.26,215.10 66.26,314.10 152.00,363.60 237.74,314.10 237.74,215.10" fill="none" stroke="#e0e6f1" stroke-width="1"/>
<polygon points="152.00,185.40 83.41,225.00 83.41,304.20 152.00,343.80 220.59,304.20 220.59,225.00" fill="none" stroke="#e0e6f1" stroke-width="1"/>
<polygon points="152.00,205.20 100.56,234.90 100.56,294.30 152.00,324.00 203.44,294.30 203.44,234.90" fill="none" stroke="#e0e6f1" stroke-width="1"/>
<polygon points="152.00,225.00 117.71,244.80 117.71,284.40 152.00,304.20 186.29,284.40 186.29,244.80" fill="none" stroke="#e0e6f1" stroke-width="1"/>
<polygon points="152.00,244.80 134.85,254.70 134.85,274.50 152.00,284.40 169.15,274.50 169.15,254.70" fill="none" stroke="#e0e6f1" stroke-width="1"/>
<line x1="152" y1="264.60" x2="152.00" y2="165.60" stroke="#c8c8c8" stroke-width="1"/>
<line x1="152" y1="264.60" x2="66.26" y2="215.10" stroke="#c8c8c8" stroke-width="1"/>
<line x1="152" y1="264.60" x2="66.26" y2="314.10" stroke="#c8c8c8" stroke-width="1"/>
<line x1="152" y1="264.60" x2="152.00" y2="363.60" stroke="#c8c8c8" stroke-width="1"/>
<line x1="152" y1="264.60" x2="237.74" y2="314.10" stroke="#c8c8c8" stroke-width="1"/>
<line x1="152" y1="264.60" x2="237.74" y2="215.10" stroke="#c8c8c8" stroke-width="1"/>
<text x="152" y="149.5" text-anchor="middle" font-size="12" letter-spacing="0.5" fill="#b0b0b0">Sales</text>
<text x="53" y="213" text-anchor="end" font-size="12" letter-spacing="0.62" fill="#b0b0b0">Administration</text>
<text x="53" y="326.5" text-anchor="end" font-size="12" letter-spacing="0.9" fill="#b0b0b0">Information Technology</text>
<text x="251" y="213" text-anchor="start" font-size="12" letter-spacing="0.5" fill="#b0b0b0">Marketing</text>
<text x="251" y="326.5" text-anchor="start" font-size="12" letter-spacing="0.5" fill="#b0b0b0">Development</text>
<polygon points="152.00,188.45 76.98,221.29 71.98,310.80 152.00,332.34 221.25,304.58 224.02,223.02" fill="none" stroke="#91cc75" stroke-width="2"/>
<circle cx="152.00" cy="188.45" r="3.5" fill="#91cc75"/>
<circle cx="76.98" cy="221.29" r="3.5" fill="#91cc75"/>
<circle cx="71.98" cy="310.80" r="3.5" fill="#91cc75"/>
<circle cx="152.00" cy="332.34" r="3.5" fill="#91cc75"/>
<circle cx="221.25" cy="304.58" r="3.5" fill="#91cc75"/>
<circle cx="224.02" cy="223.02" r="3.5" fill="#91cc75"/>
<polygon points="152.00,200.63 135.92,255.32 94.84,297.60 152.00,355.78 234.44,312.20 213.73,228.96" fill="none" stroke="#5470c6" stroke-width="2"/>
<circle cx="152.00" cy="200.63" r="3.5" fill="#5470c6"/>
<circle cx="135.92" cy="255.32" r="3.5" fill="#5470c6"/>
<circle cx="94.84" cy="297.60" r="3.5" fill="#5470c6"/>
<circle cx="152.00" cy="355.78" r="3.5" fill="#5470c6"/>
<circle cx="234.44" cy="312.20" r="3.5" fill="#5470c6"/>
<circle cx="213.73" cy="228.96" r="3.5" fill="#5470c6"/>
</g>
<rect x="87" y="70" width="25" height="14" rx="3" fill="#5470c6"/>
<text x="118" y="81.5" font-size="12.5" letter-spacing="0.35" fill="#333">Allocated Budget</text>
<rect x="87" y="94" width="25" height="14" rx="3" fill="#91cc75"/>
<text x="118" y="105.5" font-size="12.5" letter-spacing="0.35" fill="#333">Actual Spending</text>
</svg>
  <div class="ct" style="letter-spacing:1.03px">Budget Report <span style="letter-spacing:.48px">| This Month</span></div>
  <svg class="dots" viewBox="0 0 16 4"><circle cx="3" cy="2" r="1.5" fill="#aab7cf"/><circle cx="8" cy="2" r="1.5" fill="#aab7cf"/><circle cx="13" cy="2" r="1.5" fill="#aab7cf"/></svg>
</div>

</body>
</html>
